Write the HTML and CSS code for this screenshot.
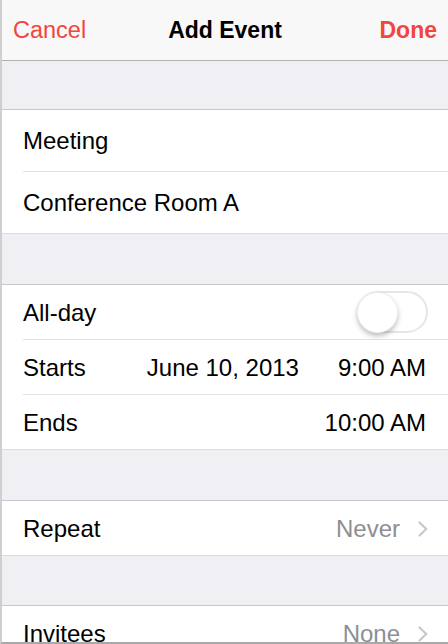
FILE: index.html
```html
<!DOCTYPE html>
<html lang="en">
<head>
<meta charset="utf-8">
<title>Add Event</title>
<link rel="stylesheet" href="styles.css">
</head>
<body>
<div class="screen">
  <header class="nav">
    <span class="nav-btn nav-left">Cancel</span>
    <span class="nav-title">Add Event</span>
    <span class="nav-btn nav-right">Done</span>
  </header>

  <div class="gap gap-first"></div>
  <section class="group">
    <div class="row row-tall"><span class="label">Meeting</span></div>
    <div class="row row-tall"><span class="label">Conference Room A</span></div>
  </section>

  <div class="gap"></div>
  <section class="group">
    <div class="row">
      <span class="label">All-day</span>
      <span class="switch"><span class="knob"></span></span>
    </div>
    <div class="row">
      <span class="label">Starts</span>
      <span class="date">June 10, 2013</span>
      <span class="time">9:00 AM</span>
    </div>
    <div class="row">
      <span class="label">Ends</span>
      <span class="time">10:00 AM</span>
    </div>
  </section>

  <div class="gap"></div>
  <section class="group">
    <div class="row">
      <span class="label">Repeat</span>
      <span class="value">Never</span>
      <svg class="chevron" width="10" height="16" viewBox="0 0 10 16"><polyline points="1.5,1.5 8.3,8 1.5,14.5" fill="none" stroke="#c7c7cc" stroke-width="2.2" stroke-linecap="round" stroke-linejoin="round"/></svg>
    </div>
  </section>

  <div class="gap gap-last"></div>
  <section class="group">
    <div class="row">
      <span class="label">Invitees</span>
      <span class="value">None</span>
      <svg class="chevron" width="10" height="16" viewBox="0 0 10 16"><polyline points="1.5,1.5 8.3,8 1.5,14.5" fill="none" stroke="#c7c7cc" stroke-width="2.2" stroke-linecap="round" stroke-linejoin="round"/></svg>
    </div>
  </section>
</div>
</body>
</html>
```

FILE: styles.css
```css
html, body {
  margin: 0;
  padding: 0;
  background: #efeff4;
}

body {
  font-family: "Liberation Sans", Arial, sans-serif;
  font-size: 24px;
  color: #000;
}

.screen {
  width: 448px;
  height: 644px;
  box-sizing: border-box;
  border-left: 2px solid #cfcfcf;
  border-bottom: 2px solid #a9a9a9;
  overflow: hidden;
  background: #efeff4;
}

.nav {
  height: 60px;
  display: grid;
  grid-template-columns: 1fr auto 1fr;
  align-items: center;
  padding: 0 11px 0 11px;
  background: #f8f8f8;
  border-bottom: 1px solid #b2b2b2;
  font-size: 23.5px;
}

.nav-btn {
  color: #f2453d;
}

.nav-left {
  justify-self: start;
}

.nav-right {
  justify-self: end;
  font-weight: bold;
  font-size: 23px;
}

.nav-title {
  font-weight: bold;
  font-size: 23px;
}

.gap {
  height: 50px;
}

.gap-first {
  height: 48px;
}

.gap-last {
  height: 49px;
}

.group {
  background: #fff;
  border-top: 1px solid #c8c7cc;
  border-bottom: 1px solid #dcdce0;
}

.row {
  height: 52px;
  padding-top: 2px;
  margin-left: 21px;
  padding-right: 20px;
  display: flex;
  align-items: center;
  border-bottom: 1px solid #e3e3e6;
}

.row:last-child {
  border-bottom: none;
}

.row-tall {
  height: 61px;
  padding-top: 0;
}

.label {
  flex: 1;
}

.date {
  margin-right: 39px;
}

.time {
  margin-right: 2px;
}

.value {
  color: #8e8e93;
  margin-right: 18px;
}

.chevron {
  display: block;
}

.switch {
  width: 71px;
  height: 42px;
  margin-top: -2px;
  box-sizing: border-box;
  border: 2px solid #e6e6ea;
  border-radius: 21px;
  display: flex;
  align-items: center;
  background: #fff;
}

.knob {
  width: 41px;
  height: 41px;
  margin-left: -2px;
  box-sizing: border-box;
  border-radius: 50%;
  background: #fff;
  border: 1px solid rgba(0, 0, 0, 0.06);
  box-shadow: 0 3px 5px rgba(0, 0, 0, 0.25);
}
```
